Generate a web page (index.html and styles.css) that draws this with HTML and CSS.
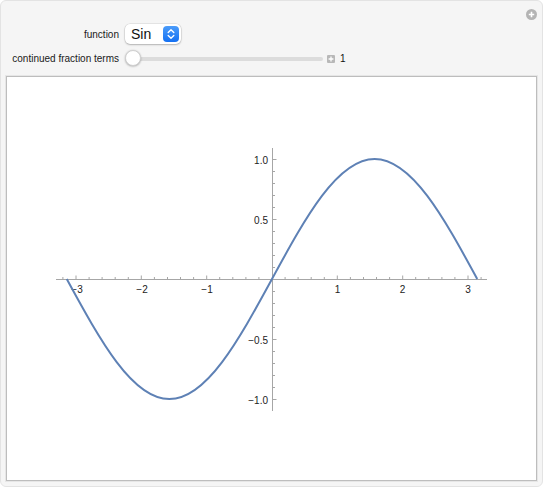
FILE: index.html
```html
<!DOCTYPE html>
<html>
<head>
<meta charset="utf-8">
<link rel="stylesheet" href="styles.css">
</head>
<body>
<div class="panel">
  <span class="corner-plus" aria-hidden="true">
    <svg width="11" height="11" viewBox="0 0 11 11"><circle cx="5.5" cy="5.5" r="5.5" fill="#b4b4b4"/><path d="M5.5 2.8v5.4M2.8 5.5h5.4" stroke="#fff" stroke-width="1.6"/></svg>
  </span>
  <div class="controls">
    <div class="label label-first">function</div>
    <div class="popup">
      <span class="popup-text">Sin</span>
      <span class="popup-btn">
        <svg width="16" height="16" viewBox="0 0 16 16"><path d="M5.2 6.4L8 3.8l2.8 2.6M5.2 9.6L8 12.2l2.8-2.6" fill="none" stroke="#fff" stroke-width="1.4" stroke-linecap="round" stroke-linejoin="round"/></svg>
      </span>
    </div>
    <div class="label">continued fraction terms</div>
    <div class="slider-row">
      <div class="track"><span class="knob"></span></div>
      <span class="mini-plus"><svg width="8" height="8" viewBox="0 0 8 8"><rect width="8" height="8" rx="1" fill="#b8b8b8"/><path d="M4 1.6v4.8M1.6 4h4.8" stroke="#fff" stroke-width="1.3"/></svg></span>
      <span class="value">1</span>
    </div>
  </div>
  <div class="frame">
    <svg class="plot" width="529" height="403" viewBox="7 77 529 403">
      <g stroke="#a6a6a6" stroke-width="1" fill="none">
        <path d="M56 279.5H487M272.5 148V411"/>
        <path d="M76 279.5v-4M141.3 279.5v-4M206.7 279.5v-4M337.3 279.5v-4M402.7 279.5v-4M468 279.5v-4"/>
        <path d="M62.9 279.5v-2.5M89.1 279.5v-2.5M102.1 279.5v-2.5M115.2 279.5v-2.5M128.3 279.5v-2.5M154.4 279.5v-2.5M167.5 279.5v-2.5M180.5 279.5v-2.5M193.6 279.5v-2.5M219.7 279.5v-2.5M232.8 279.5v-2.5M245.9 279.5v-2.5M258.9 279.5v-2.5M285.1 279.5v-2.5M298.1 279.5v-2.5M311.2 279.5v-2.5M324.3 279.5v-2.5M350.4 279.5v-2.5M363.5 279.5v-2.5M376.5 279.5v-2.5M389.6 279.5v-2.5M415.7 279.5v-2.5M428.8 279.5v-2.5M441.9 279.5v-2.5M454.9 279.5v-2.5M481.1 279.5v-2.5"/>
        <path d="M272.5 159.5h4M272.5 219.5h4M272.5 339.5h4M272.5 399.5h4"/>
        <path d="M272.5 267.5h2.5M272.5 255.5h2.5M272.5 243.5h2.5M272.5 231.5h2.5M272.5 207.5h2.5M272.5 195.5h2.5M272.5 183.5h2.5M272.5 171.5h2.5M272.5 291.5h2.5M272.5 303.5h2.5M272.5 315.5h2.5M272.5 327.5h2.5M272.5 351.5h2.5M272.5 363.5h2.5M272.5 375.5h2.5M272.5 387.5h2.5"/>
      </g>
      <g class="ticklbl" text-anchor="middle">
        <text x="77" y="293">−3</text>
        <text x="142" y="293">−2</text>
        <text x="207" y="293">−1</text>
        <text x="337.5" y="293">1</text>
        <text x="402.5" y="293">2</text>
        <text x="468" y="293">3</text>
      </g>
      <g class="ticklbl" text-anchor="end">
        <text x="268" y="163.5">1.0</text>
        <text x="268" y="223.5">0.5</text>
        <text x="268" y="343.5">−0.5</text>
        <text x="268" y="403.5">−1.0</text>
      </g>
      <path d="M66.76,279 C100.23,340.47 132.24,399 169.38,399 C206.52,399 238.53,340.47 272,279 C305.47,217.53 337.48,159 374.62,159 C411.76,159 443.77,217.53 477.24,279" fill="none" stroke="#5e81b5" stroke-width="2"/>
    </svg>
  </div>
</div>
</body>
</html>
```

FILE: styles.css
```css
html, body {
  margin: 0;
  padding: 0;
  background: #ffffff;
}
body {
  font-family: "Liberation Sans", Arial, sans-serif;
  color: #222;
}
.panel {
  position: relative;
  box-sizing: border-box;
  width: 543px;
  height: 487px;
  background: #f5f5f5;
  border: 1px solid #e3e3e3;
  border-radius: 6px;
}
.corner-plus {
  position: absolute;
  left: 525px;
  top: 8px;
  width: 11px;
  height: 11px;
  line-height: 0;
}
.controls {
  display: grid;
  grid-template-columns: 118px auto;
  grid-template-rows: 20px 17px;
  column-gap: 6px;
  row-gap: 6px;
  padding-top: 23px;
  align-items: center;
}
.label {
  text-align: right;
  font-size: 10px;
  line-height: 12px;
  color: #1a1a1a;
  white-space: nowrap;
  justify-self: end;
}
.label-first {
  padding-top: 2px;
}
.popup {
  width: 56px;
  height: 20px;
  box-sizing: border-box;
  background: #fff;
  border-radius: 5px;
  box-shadow: 0 0 0 0.5px rgba(0,0,0,0.12), 0 1px 2px rgba(0,0,0,0.22);
  display: flex;
  align-items: center;
  justify-content: space-between;
  padding: 0 2px 0 6px;
}
.popup-text {
  font-size: 14px;
  line-height: 16px;
  color: #111;
}
.popup-btn {
  width: 16px;
  height: 16px;
  border-radius: 4px;
  background: linear-gradient(#4b9cfa, #1470f2);
  line-height: 0;
}
.slider-row {
  display: flex;
  align-items: center;
  height: 17px;
}
.track {
  position: relative;
  width: 198px;
  height: 4px;
  background: #dcdcdc;
  border-radius: 2px;
}
.knob {
  position: absolute;
  left: 0;
  top: -7px;
  width: 16px;
  height: 16px;
  box-sizing: border-box;
  border-radius: 50%;
  background: #fff;
  border: 0.5px solid #d0d0d0;
  box-shadow: 0 0.5px 2px rgba(0,0,0,0.3);
}
.mini-plus {
  margin-left: 4px;
  width: 8px;
  height: 8px;
  line-height: 0;
}
.value {
  margin-left: 5px;
  font-size: 10px;
  line-height: 12px;
  color: #111;
}
.frame {
  box-sizing: border-box;
  margin: 9px 0 0 5px;
  width: 531px;
  height: 405px;
  background: #fff;
  border: 1px solid #bdbdbd;
  box-shadow: 0 0 0 1px #e6e6e6;
}
.plot {
  display: block;
}
.ticklbl {
  font-family: "Liberation Sans", Arial, sans-serif;
  font-size: 10px;
  fill: #222;
}
```
